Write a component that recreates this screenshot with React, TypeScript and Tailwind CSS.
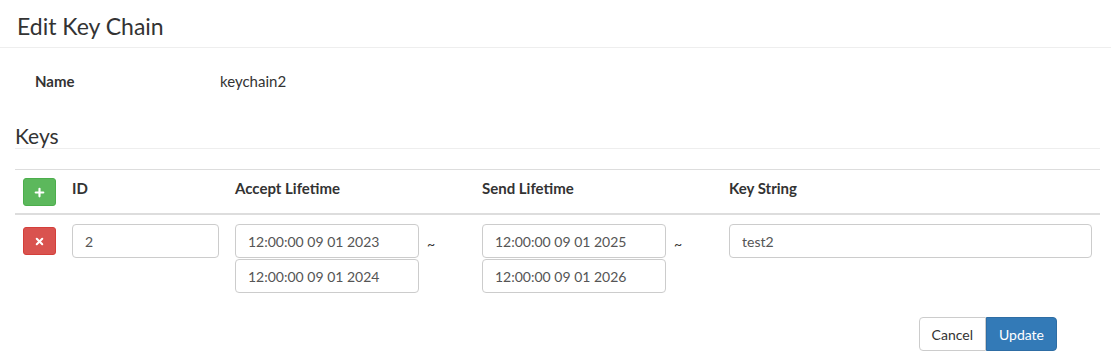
import { Plus, X } from 'lucide-react';

const keys = [
  {
    id: '2',
    accept: ['12:00:00 09 01 2023', '12:00:00 09 01 2024'],
    send: ['12:00:00 09 01 2025', '12:00:00 09 01 2026'],
    keyString: 'test2',
  },
];

const inputCls =
  'h-[34px] rounded-[4px] border border-[#ccc] bg-white px-3 text-[14px] text-[#555] outline-none';

function LifetimeCell({ values }: { values: string[] }) {
  return (
    <div className="flex items-start px-2 pt-[9px]">
      <div className="flex flex-col gap-px">
        {values.map((v) => (
          <input key={v} readOnly value={v} className={`${inputCls} w-[184px]`} />
        ))}
      </div>
      <span className="ml-2 mt-[9px] text-[14px] text-[#333]">~</span>
    </div>
  );
}

export default function App() {
  return (
    <div className="min-h-[362px] bg-white font-['Lato','Liberation_Sans',sans-serif] text-[15px] text-[#333]">
      {/* Title */}
      <div className="border-b border-[#eee] pl-[17px] pt-[14px] pb-[9px]">
        <h3 className="text-[23px] leading-[24px] text-[#333]">Edit Key Chain</h3>
      </div>

      <div className="pl-[15px] pr-[11px]">
        {/* Name */}
        <div className="flex h-[67px] items-center pl-[20px]">
          <span className="w-[185px] font-bold">Name</span>
          <span>keychain2</span>
        </div>

        {/* Keys heading */}
        <div className="mt-[10px] border-b border-[#eee] pb-[1px]">
          <h4 className="text-[21px] leading-[22px]">Keys</h4>
        </div>

        {/* Table */}
        <div className="mt-[20px] border-t border-[#ddd]">
          <div className="grid h-[45px] grid-cols-[49px_163px_247px_247px_1fr] items-start border-b-2 border-[#ddd] pt-2 font-bold leading-[20px]">
            <div className="px-2">
              <button className="flex h-[28px] w-[33px] items-center justify-center rounded-[3px] border border-[#4cae4c] bg-[#5cb85c] text-white">
                <Plus size={13} strokeWidth={4} />
              </button>
            </div>
            <div className="px-2">ID</div>
            <div className="px-2">Accept Lifetime</div>
            <div className="px-2">Send Lifetime</div>
            <div className="px-2">Key String</div>
          </div>

          {keys.map((k) => (
            <div
              key={k.id}
              className="grid grid-cols-[49px_163px_247px_247px_1fr] items-start pb-2"
            >
              <div className="px-2 pt-[12px]">
                <button className="flex h-[28px] w-[33px] items-center justify-center rounded-[3px] border border-[#d43f3a] bg-[#d9534f] text-white">
                  <X size={11} strokeWidth={4.5} />
                </button>
              </div>
              <div className="px-2 pt-[9px]">
                <input readOnly value={k.id} className={`${inputCls} w-[147px]`} />
              </div>
              <LifetimeCell values={k.accept} />
              <LifetimeCell values={k.send} />
              <div className="px-2 pt-[9px]">
                <input readOnly value={k.keyString} className={`${inputCls} w-full`} />
              </div>
            </div>
          ))}
        </div>

        {/* Actions */}
        <div className="mt-[16px] flex justify-end pr-[43px]">
          <button className="h-[34px] rounded-l-[4px] border border-[#ccc] bg-white px-3 text-[14px] text-[#333]">
            Cancel
          </button>
          <button className="h-[34px] rounded-r-[4px] border border-[#2e6da4] bg-[#337ab7] px-3 text-[14px] text-white">
            Update
          </button>
        </div>
      </div>
    </div>
  );
}
